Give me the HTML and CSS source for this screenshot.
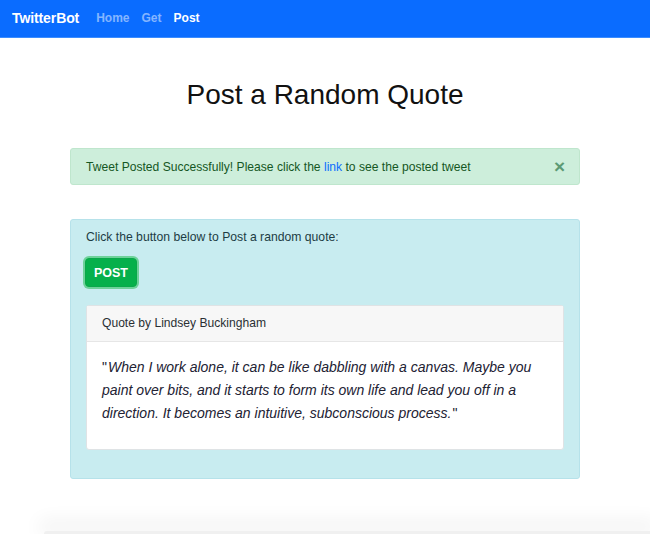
FILE: index.html
```html
<!DOCTYPE html>
<html>
<head>
<meta charset="utf-8">
<link rel="stylesheet" href="styles.css">
</head>
<body>
<nav class="navbar">
  <span class="brand">TwitterBot</span>
  <a class="nav-link">Home</a>
  <a class="nav-link">Get</a>
  <a class="nav-link active">Post</a>
</nav>
<main class="container">
  <h1 class="title">Post a Random Quote</h1>
  <div class="alert-success">
    <span>Tweet Posted Successfully! Please click the <a class="link">link</a> to see the posted tweet</span>
    <span class="close">&times;</span>
  </div>
  <div class="info-box">
    <p class="prompt">Click the button below to Post a random quote:</p>
    <button class="btn-post">POST</button>
    <div class="card">
      <div class="card-header">Quote by Lindsey Buckingham</div>
      <p class="card-body">"<em>When I work alone, it can be like dabbling with a canvas. Maybe you paint over bits, and it starts to form its own life and lead you off in a direction. It becomes an intuitive, subconscious process.</em>"</p>
    </div>
  </div>
</main>
<div class="footer-sheet"></div>
</body>
</html>
```
FILE: styles.css
```css
html, body {
  margin: 0;
  padding: 0;
  background: #fff;
  font-family: "Liberation Sans", Arial, sans-serif;
  color: #212529;
  overflow: hidden;
}
body {
  height: 534px;
  position: relative;
}
.navbar {
  height: 38px;
  background: #0a6cff;
  display: flex;
  align-items: center;
  padding: 0 12px 1px;
  box-sizing: border-box;
  border-bottom: 1px solid #3b8cff;
}
.brand {
  color: #fff;
  font-weight: bold;
  font-size: 14px;
  margin-right: 17px;
  letter-spacing: -0.1px;
}
.nav-link {
  color: rgba(255,255,255,0.5);
  font-weight: bold;
  font-size: 12px;
  margin-right: 12px;
}
.nav-link.active { color: #fff; }
.container {
  width: 510px;
  margin: 0 auto;
}
.title {
  margin: 40px 0 0;
  height: 70px;
  text-align: center;
  font-weight: normal;
  font-size: 28px;
  line-height: 34px;
  color: #111;
}
.alert-success {
  height: 37px;
  box-sizing: border-box;
  background: #cdeedb;
  border: 1px solid #bfe6cd;
  border-radius: 3px;
  color: #155724;
  font-size: 12.1px;
  display: flex;
  align-items: center;
  justify-content: space-between;
  padding: 0 14px 0 15px;
}
.link { color: #0a6cff; }
.close {
  font-size: 19px;
  font-weight: bold;
  color: #5c9a74;
  line-height: 1;
}
.info-box {
  margin-top: 34px;
  background: #c8ecf0;
  border: 1px solid #b6e2ea;
  border-radius: 3px;
  padding: 9px 15px 28px;
}
.prompt {
  margin: 0 0 12px;
  font-size: 12.2px;
  line-height: 17px;
  color: #1d3c44;
}
.btn-post {
  display: block;
  width: 52px;
  height: 29px;
  background: #06b04b;
  border: 1px solid #0aa84a;
  border-radius: 4px;
  box-shadow: 0 0 0 2px #6ed29a;
  color: #fff;
  font-family: "Liberation Sans", Arial, sans-serif;
  font-weight: bold;
  font-size: 12.5px;
  padding: 0;
  margin-left: -1px;
}
.card {
  margin-top: 18px;
  background: #fff;
  border: 1px solid #dfe3e5;
  border-radius: 3px;
}
.card-header {
  background: #f7f7f7;
  border-bottom: 1px solid #e6e6e6;
  height: 35px;
  line-height: 35px;
  padding: 0 15px;
  font-size: 12.1px;
  color: #2a2f33;
}
.card-body {
  margin: 0;
  padding: 14px 15px 24px;
  font-size: 14px;
  line-height: 23px;
  color: #223;
}
.card-body em {
  font-style: italic;
  margin: 0 1px;
}
.footer-sheet {
  position: absolute;
  left: 44px;
  right: 0;
  top: 531px;
  bottom: 0;
  border-radius: 16px 0 0 0;
  background: #f0f0f0;
  box-shadow: 0 -6px 18px 6px rgba(0,0,0,0.05);
}
```
